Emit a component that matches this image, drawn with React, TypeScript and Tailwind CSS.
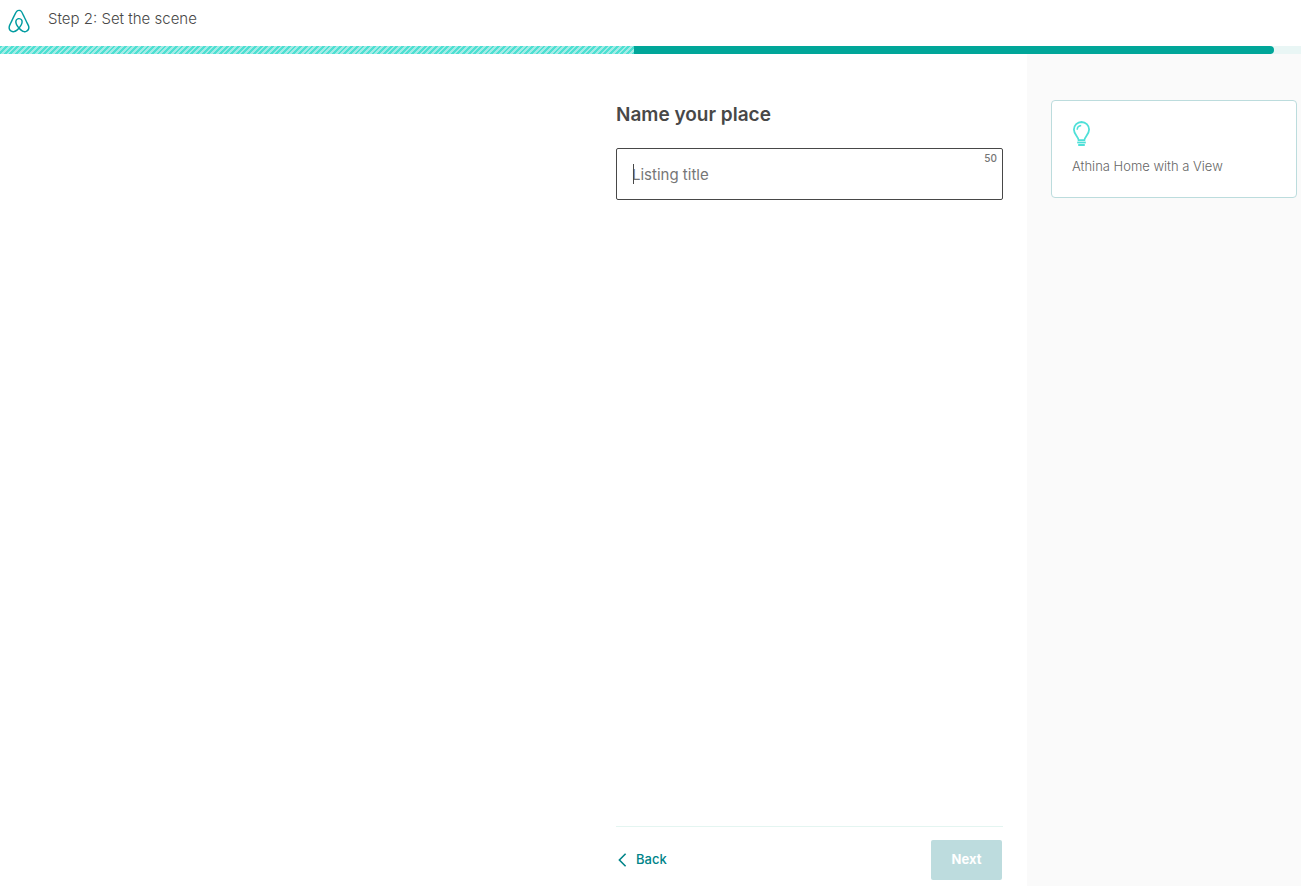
import { useState } from 'react';
import { FaAirbnb } from 'react-icons/fa';

const TITLE_LIMIT = 50;

const LightbulbIcon = () => (
  <svg viewBox="0 0 20 26" className="h-[26px] w-5" fill="none" stroke="#4fe0d8" strokeWidth="1.8" aria-hidden="true">
    <path d="M6.6 19.1c-.3-3.2-4.7-5.8-4.7-10.6A7.7 7.7 0 0 1 9.5 1a7.7 7.7 0 0 1 7.6 7.5c0 4.8-4.4 7.4-4.7 10.6z" />
    <path d="M5.2 8.8c0-2.4 1.6-4 4-4.3" strokeWidth="1.5" />
    <path d="M5.2 21.5h8.6" />
    <path d="M6.2 24h6.6" strokeWidth="2" />
  </svg>
);

const ProgressBar = () => (
  <div
    className="flex h-2 shrink-0 bg-[#e9f6f5]"
    role="progressbar"
    aria-label="Listing progress"
    aria-valuenow={98}
    aria-valuemin={0}
    aria-valuemax={100}
  >
    <div className="w-[48.7%] bg-[repeating-linear-gradient(135deg,#4de0d2_0px,#4de0d2_2px,#a2ebe6_2px,#a2ebe6_4px)]" />
    <div className="w-[49.2%] rounded-r-sm bg-[#00a699]" />
  </div>
);

const App = () => {
  const [title, setTitle] = useState('');

  return (
    <div className="flex min-h-screen flex-col bg-white font-['Inter','Liberation_Sans',sans-serif] text-[#484848]">
      <header className="flex h-[46px] shrink-0 items-center pb-1 pl-1.5">
        <a href="#home" aria-label="Home" className="text-[#009ba0]">
          <FaAirbnb size={26} />
        </a>
        <p className="ml-4 pb-1 text-[15px] leading-6 font-light">Step 2: Set the scene</p>
      </header>
      <ProgressBar />

      <div className="flex grow">
        <main className="flex grow justify-end pr-6">
          <form className="flex w-[387px] flex-col" onSubmit={(event) => event.preventDefault()}>
            <h1 className="mt-[49px] text-[19px] leading-6 font-semibold">
              <label htmlFor="listing-title">Name your place</label>
            </h1>
            <div className="relative mt-[21px]">
              <input
                id="listing-title"
                type="text"
                value={title}
                maxLength={TITLE_LIMIT}
                placeholder="Listing title"
                onChange={(event) => setTitle(event.target.value)}
                className="h-[52px] w-full rounded-xs border border-[#484848] px-[15px] text-[15px] outline-none placeholder:text-[#767676]"
              />
              {title === '' ? (
                <span className="pointer-events-none absolute top-4 left-[17px] h-5 w-px bg-[#484848]" />
              ) : null}
              <span className="absolute top-1 right-1.5 text-[10px] leading-3 font-medium text-[#767676]">
                {TITLE_LIMIT - title.length}
              </span>
            </div>

            <footer className="mt-auto flex items-center justify-between border-t border-[#e4f5f1] pt-[13px] pr-px pb-1.5">
              <button type="button" className="flex items-center gap-2 pl-0.5 text-[13px] font-medium text-[#008489]">
                <svg viewBox="0 0 10 14" className="h-3.5 w-2.5" fill="none" stroke="currentColor" strokeWidth="1.6" aria-hidden="true">
                  <path d="M7.6.8 1.4 7l6.2 6.2" />
                </svg>
                Back
              </button>
              <button type="submit" className="h-10 w-[71px] rounded-xs bg-[#bddcde] text-[13px] font-bold text-white">
                Next
              </button>
            </footer>
          </form>
        </main>

        <aside className="w-[274px] shrink-0 bg-[#fafafa] pt-[46px] pr-1 pl-6">
          <div className="h-[98px] rounded border border-[#bcdcdd] bg-white px-5 pt-5">
            <LightbulbIcon />
            <p className="mt-[9px] text-[13px] leading-5 font-light text-[#666666]">Athina Home with a View</p>
          </div>
        </aside>
      </div>
    </div>
  );
};

export default App;
